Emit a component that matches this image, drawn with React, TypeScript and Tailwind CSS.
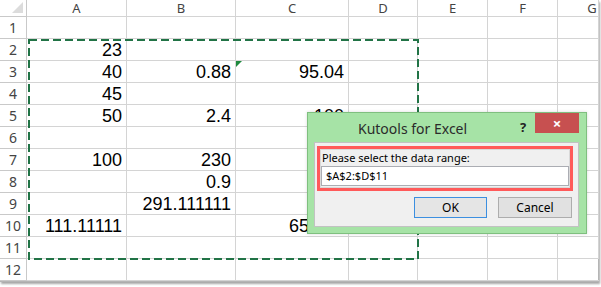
import React from 'react';

const cols = ['A', 'B', 'C', 'D', 'E', 'F', 'G'];

// row -> column index -> value
const data: Record<number, Record<number, string>> = {
  2: { 0: '23' },
  3: { 0: '40', 1: '0.88', 2: '95.04' },
  4: { 0: '45' },
  5: { 0: '50', 1: '2.4', 2: '100' },
  7: { 0: '100', 1: '230' },
  8: { 1: '0.9' },
  9: { 1: '291.111111' },
  10: { 0: '111.11111', 2: '65.667' },
};

const rows = Array.from({ length: 12 }, (_, i) => i + 1);

const Sheet: React.FC = () => {
  return (
    <div className="grid w-[599px] grid-cols-[27px_100px_109px_113px_69px_70px_70px_41px] grid-rows-[17px_repeat(12,22px)] border-r border-b border-[#b5b5b5] shadow-[1px_2px_2px_rgba(0,0,0,0.35)]">
      {/* select-all corner */}
      <div className="relative border-r border-b border-[#c9c9c9] bg-white">
        <div className="absolute right-[3px] bottom-[3px] h-0 w-0 border-t-[11px] border-r-[11px] border-t-transparent border-r-[#dcdcdc]" />
      </div>
      {cols.map((c) => (
        <div
          key={c}
          className="flex items-center justify-center overflow-hidden border-r border-b border-[#d4d4d4] bg-white text-[13px] leading-[15px] text-[#444] [font-family:'Noto_Sans',sans-serif] last:border-r-0"
        >
          <span className={c === 'G' ? 'translate-x-[14px]' : ''}>{c}</span>
        </div>
      ))}
      {rows.map((r) => (
        <React.Fragment key={r}>
          <div className="flex items-center justify-center border-r border-b border-[#c9c9c9] bg-white text-[14px] leading-none text-[#444] [font-family:'Noto_Sans',sans-serif]">
            {r}
          </div>
          {cols.map((c, ci) => (
            <div
              key={c}
              className="relative flex items-center justify-end border-r border-b border-[#d4d4d4] pr-[4px] text-[18px] leading-none text-black [font-family:'Liberation_Sans',Arial,sans-serif] last:border-r-0"
            >
              {r === 3 && ci === 2 && (
                <span className="absolute top-0 left-0 h-0 w-0 border-t-[6px] border-r-[6px] border-t-[#1e8a3e] border-r-transparent" />
              )}
              {data[r]?.[ci] ?? ''}
            </div>
          ))}
        </React.Fragment>
      ))}
    </div>
  );
};

const KutoolsDialog: React.FC = () => {
  return (
    <div className="absolute top-[112px] left-[307px] flex h-[122px] w-[280px] flex-col border border-[#7fbf7f] bg-[#a6e3a6] pr-[7px] pb-[6px] pl-[6px] shadow-[0_0_3px_rgba(0,0,0,0.15)] [font-family:'Noto_Sans',sans-serif]">
      {/* title bar */}
      <div className="relative flex h-[29px] shrink-0 items-center">
        <span className="pl-[44px] pt-[2px] text-[14px] text-[#2b2b2b]">Kutools for Excel</span>
        <span className="absolute top-[5px] left-[206px] text-[13px] font-bold text-[#222]">?</span>
        <div className="absolute top-0 right-0 flex h-[20px] w-[44px] items-center justify-center bg-[#c75050] text-[15px] leading-none font-bold text-white">
          ×
        </div>
      </div>
      {/* client area */}
      <div className="flex flex-1 flex-col border border-[#c2c2c2] bg-[#f0f0f0] pt-[3px] pr-[5px] pl-[2px]">
        <div className="border-[3px] border-[#ff5a5a]">
          <div className="flex flex-col border border-[#d9d9d9] pb-[1px]">
            <span className="h-[16px] pt-[1px] pl-[1px] text-[11px] leading-[14px] text-black">
              Please select the data range:
            </span>
            <div className="flex h-[20px] items-center border border-[#abadb3] bg-white pl-[4px] text-[11px] text-black">
              $A$2:$D$11
            </div>
          </div>
        </div>
        <div className="mt-[6px] flex justify-end gap-[11px] pr-[1px]">
          <button className="h-[21px] w-[73px] border border-[#3c8fe0] bg-[#e5e5e5] text-[12px] leading-none text-black">
            OK
          </button>
          <button className="h-[21px] w-[74px] border border-[#adadad] bg-[#e1e1e1] text-[12px] leading-none text-black">
            Cancel
          </button>
        </div>
      </div>
    </div>
  );
};

const App: React.FC = () => {
  return (
    <div className="relative h-[287px] w-[601px] overflow-hidden bg-white">
      <Sheet />
      {/* copy selection marquee */}
      <svg className="pointer-events-none absolute top-0 left-0" width="601" height="287">
        <rect x="29" y="40" width="389" height="219" fill="none" stroke="#217346" strokeWidth="2" strokeDasharray="8 4" />
      </svg>
      <KutoolsDialog />
    </div>
  );
};

export default App;
